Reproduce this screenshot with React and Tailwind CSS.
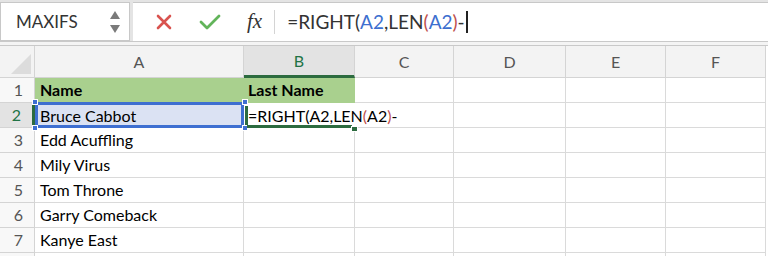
const COLS = ['A', 'B', 'C', 'D', 'E', 'F'];
const NAMES = ['Bruce Cabbot', 'Edd Acuffling', 'Mily Virus', 'Tom Throne', 'Garry Comeback', 'Kanye East'];

const FONT = { fontFamily: 'Lato, "Open Sans", sans-serif' };

const Handle = ({ className }) => (
  <span className={`absolute w-[6px] h-[6px] bg-[#3e6fd1] border border-white ${className}`} />
);

const FormulaBar = () => (
  <div className="flex h-[41px] bg-[#e4e4e4] pt-[2px]">
    {/* name box */}
    <div className="w-[130px] flex items-center justify-between bg-white border border-[#c8c8c8] pl-[15px] pr-[9px]">
      <span className="text-[17px] text-[#333]">MAXIFS</span>
      <div className="flex flex-col gap-[6px]">
        <svg width="10" height="8" viewBox="0 0 10 8"><path d="M5 0 L10 8 L0 8 Z" fill="#7a7a7a" /></svg>
        <svg width="10" height="8" viewBox="0 0 10 8"><path d="M0 0 L10 0 L5 8 Z" fill="#7a7a7a" /></svg>
      </div>
    </div>
    <div className="w-[3px]" />
    {/* formula area */}
    <div className="flex-1 flex items-center bg-white border-t border-[#c8c8c8]">
      <svg className="ml-[23px]" width="16" height="16" viewBox="0 0 16 16">
        <path d="M2 2 L14 14 M14 2 L2 14" stroke="#d9534f" strokeWidth="2.6" strokeLinecap="round" />
      </svg>
      <svg className="ml-[27px]" width="22" height="16" viewBox="0 0 22 16">
        <path d="M2 8 L8 14 L20 2" fill="none" stroke="#62b45a" strokeWidth="2.8" strokeLinecap="round" strokeLinejoin="round" />
      </svg>
      <span className="ml-[26px] text-[21px] italic text-[#333]" style={{ fontFamily: '"Liberation Serif", serif' }}>fx</span>
      <div className="ml-[12px] w-px h-[24px] bg-[#d4d4d4]" />
      <div className="ml-[12px] text-[19px] text-[#333] flex items-center">
        <span>=RIGHT(</span>
        <span className="text-[#3d6fcf]">A2</span>
        <span>,LEN</span>
        <span className="text-[#c0504d]">(</span>
        <span className="text-[#3d6fcf]">A2</span>
        <span className="text-[#c0504d]">)</span>
        <span>-</span>
        <span className="w-[2px] h-[22px] bg-[#222] ml-px" />
      </div>
    </div>
  </div>
);

const App = () => {
  return (
    <div className="w-[768px] h-[256px] bg-white overflow-hidden" style={FONT}>
      <FormulaBar />
      <div className="h-[5px] bg-[#f4f4f4] border-y border-[#c9c9c9]" />

      <div className="grid grid-cols-[35px_209px_111px_99px_112px_100px_100px] grid-rows-[32px_repeat(8,25px)]">
        {/* header row */}
        <div className="relative bg-[#f3f3f3] border-r border-b border-[#d4d4d4]">
          <svg className="absolute right-[3px] bottom-[3px]" width="20" height="20" viewBox="0 0 20 20">
            <path d="M20 0 L20 20 L0 20 Z" fill="#dcdcdc" />
          </svg>
        </div>
        {COLS.map((c) => (
          <div
            key={c}
            className={`flex items-center justify-center text-[16px] border-r ${
              c === 'B'
                ? 'bg-[#e3e3e3] text-[#217346] border-b-[3px] border-b-[#2c6b3f] border-r-[#d4d4d4]'
                : 'bg-[#f3f3f3] text-[#555] border-b border-[#d4d4d4]'
            }`}
          >
            {c}
          </div>
        ))}

        {/* row 1 */}
        <div className="flex items-center justify-end pr-[11px] text-[16px] text-[#555] bg-[#f8f8f8] border-r border-b border-[#d4d4d4]">1</div>
        <div className="flex items-center pl-[5px] bg-[#a9d08e] text-[16px] font-bold text-black border-r border-b border-[#a9d08e]">Name</div>
        <div className="flex items-center pl-[4px] bg-[#a9d08e] text-[16px] font-bold text-black border-b border-[#a9d08e]">Last Name</div>
        {[0, 1, 2, 3].map((i) => (
          <div key={i} className="border-r border-b border-[#dadada]" />
        ))}

        {/* row 2 */}
        <div className="flex items-center justify-end pr-[11px] text-[16px] text-[#217346] bg-[#e3e3e3] border-r-[3px] border-r-[#2c6b3f] border-b border-b-[#d4d4d4]">2</div>
        <div className="relative flex items-center pl-[5px] text-[16px] text-black bg-[#dbe2f3]">
          <div className="absolute inset-x-0 top-[-1px] bottom-0 border-[3px] border-[#3e6fd1]" />
          <Handle className="left-[-3px] top-[-4px]" />
          <Handle className="right-[-4px] top-[-4px]" />
          <Handle className="left-[-3px] bottom-[-3px]" />
          <Handle className="right-[-4px] bottom-[-3px]" />
          <span className="relative">Bruce Cabbot</span>
        </div>
        <div className="relative flex items-center pl-[4px] text-[16px] text-black whitespace-nowrap overflow-visible z-10">
          <div className="absolute left-[1px] top-[3px] bottom-[3px] w-[3px] bg-[#2c6b3f]" />
          <div className="absolute left-[3px] right-[3px] bottom-0 h-[3px] bg-[#2c6b3f]" />
          <span className="absolute right-[-3px] bottom-[-4px] w-[7px] h-[6px] bg-[#2c6b3f] border border-white" />
          <span className="relative">
            =RIGHT(A2,LEN<span className="text-[#c0504d]">(</span>A2<span className="text-[#c0504d]">)</span>-
          </span>
        </div>
        <div className="border-b border-[#dadada] border-r" />
        {[0, 1, 2].map((i) => (
          <div key={i} className="border-r border-b border-[#dadada]" />
        ))}

        {/* rows 3-8 */}
        {[3, 4, 5, 6, 7, 8].map((r) => (
          <div key={r} className="contents">
            <div className="flex items-center justify-end pr-[11px] text-[16px] text-[#555] bg-[#f8f8f8] border-r border-b border-[#d4d4d4]">
              {r < 8 ? r : ''}
            </div>
            <div className="flex items-center pl-[5px] text-[16px] text-black border-r border-b border-[#dadada]">
              {NAMES[r - 2] || ''}
            </div>
            {[0, 1, 2, 3, 4].map((i) => (
              <div key={i} className="border-r border-b border-[#dadada]" />
            ))}
          </div>
        ))}
      </div>
    </div>
  );
};

export default App;
